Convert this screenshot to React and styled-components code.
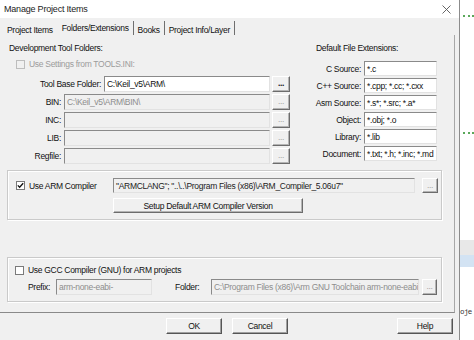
import React from 'react'
import styled, { createGlobalStyle } from 'styled-components'

const GlobalStyle = createGlobalStyle`
  *, *::before, *::after { box-sizing: border-box; }
  html, body { margin: 0; padding: 0; background: #fff; }
  body {
    font-family: "Liberation Sans", Arial, sans-serif;
    font-size: 8.5px;
    letter-spacing: -0.3px;
    color: #111;
  }
  #root { width: 474px; height: 340px; overflow: hidden; }
`

const folderRows = [
  { label: 'Tool Base Folder:', value: 'C:\\Keil_v5\\ARM\\', wide: true },
  { label: 'BIN:', value: 'C:\\Keil_v5\\ARM\\BIN\\', disabled: true },
  { label: 'INC:', value: '', disabled: true },
  { label: 'LIB:', value: '', disabled: true },
  { label: 'Regfile:', value: '', disabled: true }
]

const extRows = [
  { label: 'C Source:', value: '*.c' },
  { label: 'C++ Source:', value: '*.cpp; *.cc; *.cxx' },
  { label: 'Asm Source:', value: '*.s*; *.src; *.a*' },
  { label: 'Object:', value: '*.obj; *.o' },
  { label: 'Library:', value: '*.lib' },
  { label: 'Document:', value: '*.txt; *.h; *.inc; *.md' }
]

const CheckBox = ({ checked, disabled }) => (
  <Box disabled={disabled}>
    {checked &&
      <svg width="7" height="7" viewBox="0 0 7 7">
        <polyline points="0.8,3.4 2.6,5.3 6.2,1.2" fill="none" stroke="#111" strokeWidth="1.3" />
      </svg>}
  </Box>
)

export default function App() {
  return (
    <Screen>
      <GlobalStyle />
      <Window>
        <TitleBar>
          <Title>Manage Project Items</Title>
          <svg width="9" height="9" viewBox="0 0 9 9">
            <path d="M0.5 0.5 L8.5 8.5 M8.5 0.5 L0.5 8.5" stroke="#555" strokeWidth="0.9" />
          </svg>
        </TitleBar>

        <TabStrip>
          <Tab>Project Items</Tab>
          <Tab active sep>Folders/Extensions</Tab>
          <Tab sep>Books</Tab>
          <Tab sep>Project Info/Layer</Tab>
        </TabStrip>

        <TabPage>
          <TopSection>
            <Column>
              <Heading>Development Tool Folders:</Heading>
              <CheckRow indent={9} disabled>
                <CheckBox disabled />
                <span>Use Settings from TOOLS.INI:</span>
              </CheckRow>
              <FolderList>
                {folderRows.map(row => (
                  <FolderRow key={row.label}>
                    <RowLabel width={row.wide ? 94 : 54}>{row.label}</RowLabel>
                    <Field disabled={row.disabled}>{row.value}</Field>
                    <DotsButton disabled={row.disabled} width={18}>...</DotsButton>
                  </FolderRow>
                ))}
              </FolderList>
            </Column>

            <Column>
              <Heading indent={26}>Default File Extensions:</Heading>
              <ExtList>
                {extRows.map(row => (
                  <ExtRow key={row.label}>
                    <RowLabel width={71}>{row.label}</RowLabel>
                    <Field>{row.value}</Field>
                  </ExtRow>
                ))}
              </ExtList>
            </Column>
          </TopSection>

          <ArmGroup>
            <CheckRow>
              <CheckBox checked />
              <span>Use ARM Compiler</span>
            </CheckRow>
            <Field disabled dark>"ARMCLANG"; "..\..\Program Files (x86)\ARM_Compiler_5.06u7"</Field>
            <DotsButton disabled width={16}>...</DotsButton>
            <SetupButton>Setup Default ARM Compiler Version</SetupButton>
          </ArmGroup>

          <GccGroup>
            <CheckRow>
              <CheckBox />
              <span>Use GCC Compiler (GNU) for ARM projects</span>
            </CheckRow>
            <GccRow>
              <InlineLabel gap={13} width={28}>Prefix:</InlineLabel>
              <Field disabled size={96}>arm-none-eabi-</Field>
              <InlineLabel gap={23} width={36}>Folder:</InlineLabel>
              <Field disabled size={208}>C:\Program Files (x86)\Arm GNU Toolchain arm-none-eabi\</Field>
              <DotsButton disabled width={15} gap={3}>...</DotsButton>
            </GccRow>
          </GccGroup>
        </TabPage>

        <ButtonRow>
          <PushButton>OK</PushButton>
          <PushButton>Cancel</PushButton>
          <PushButton push>Help</PushButton>
        </ButtonRow>
      </Window>

      <Backdrop>
        <GreenDots top={15} />
        <GreenDots top={115} />
        <Band top={106} height={15} color="#e8e8e8" />
        <Band height={12} color="#d3e3f3" />
        <CodeText>oje</CodeText>
      </Backdrop>
    </Screen>
  )
}

const Screen = styled.div`
  display: flex;
  width: 474px;
  height: 340px;
  overflow: hidden;
`

const Window = styled.div`
  flex: none;
  width: 460px;
  height: 340px;
  display: flex;
  flex-direction: column;
  background: #f0f0f0;
  border-right: 1px solid #8c8c8c;
`

const TitleBar = styled.div`
  height: 18px;
  flex: none;
  background: #fff;
  display: flex;
  align-items: center;
  justify-content: space-between;
  padding: 0 8px 0 4px;
`

const Title = styled.span`
  font-size: 9px;
  letter-spacing: -0.2px;
  color: #222;
`

const TabStrip = styled.div`
  height: 17px;
  flex: none;
  display: flex;
  align-items: flex-end;
  padding-left: 3px;
`

const Tab = styled.div`
  height: 14px;
  line-height: 10px;
  padding: ${p => (p.active ? '2px 4px 2px' : '4px 4px 0')};
  border-right: 1px solid ${p => (p.sep ? '#6f6f6f' : 'transparent')};
  white-space: nowrap;
`

const TabPage = styled.div`
  flex: none;
  height: 278px;
  margin-right: 4px;
  padding: 7px 12px 0 7px;
  border-right: 1px solid #a8a8a8;
  border-bottom: 1px solid #8a8a8a;
  display: flex;
  flex-direction: column;
`

const TopSection = styled.div`
  display: grid;
  grid-template-columns: 283px 152px;
  height: 122px;
`

const Column = styled.div`
  display: flex;
  flex-direction: column;
`

const Heading = styled.div`
  line-height: 12px;
  height: 12px;
  padding-left: ${p => p.indent || 2}px;
  white-space: nowrap;
`

const CheckRow = styled.div`
  display: flex;
  align-items: center;
  gap: 4px;
  height: ${p => (p.indent ? '12px' : 'auto')};
  margin: ${p => (p.indent ? '4px 0 0' : '0')};
  padding-left: ${p => p.indent || 0}px;
  color: ${p => (p.disabled ? '#9c9c9c' : '#111')};
  white-space: nowrap;
`

const Box = styled.span`
  flex: none;
  width: 9px;
  height: 9px;
  display: flex;
  align-items: center;
  justify-content: center;
  background: ${p => (p.disabled ? '#f0f0f0' : '#fff')};
  border: 1px solid ${p => (p.disabled ? '#bdbdbd' : '#7a7a7a')};
`

const FolderList = styled.div`
  margin-top: 6px;
  display: flex;
  flex-direction: column;
  gap: 2px;
`

const FolderRow = styled.div`
  display: flex;
  align-items: center;
  height: 16px;
`

const ExtList = styled.div`
  margin-top: 7px;
  display: flex;
  flex-direction: column;
  gap: 2px;
`

const ExtRow = styled.div`
  display: flex;
  align-items: center;
  height: 15px;
  width: 147px;
`

const RowLabel = styled.span`
  flex: none;
  width: ${p => p.width}px;
  margin-right: 3px;
  text-align: right;
  white-space: nowrap;
`

const Field = styled.div`
  flex: ${p => (p.size ? 'none' : '1')};
  width: ${p => (p.size ? `${p.size}px` : 'auto')};
  min-width: 0;
  height: 100%;
  padding: 0 2px;
  line-height: 14px;
  overflow: hidden;
  white-space: nowrap;
  background: ${p => (p.disabled ? '#f0f0f0' : '#fff')};
  color: ${p => (p.disabled ? (p.dark ? '#222' : '#8e8e8e') : '#111')};
  border: 1px solid;
  border-color: #8a8a8a #e2e2e2 #e2e2e2 #8a8a8a;
`

const DotsButton = styled.div`
  flex: none;
  width: ${p => p.width}px;
  height: 100%;
  margin-left: ${p => (p.gap !== undefined ? p.gap : 2)}px;
  justify-self: end;
  display: flex;
  align-items: center;
  justify-content: center;
  padding-bottom: 2px;
  font-weight: ${p => (p.disabled ? 'normal' : 'bold')};
  color: ${p => (p.disabled ? '#a3a3a3' : '#111')};
  background: #f0f0f0;
  border: 1px solid;
  border-color: #fff #6c6c6c #6c6c6c #fff;
  box-shadow: inset -1px -1px #b4b4b4;
`

const GroupBox = styled.div`
  border: 1px solid #cacaca;
  box-shadow: inset 1px 1px #fff, 1px 1px #fff;
`

const ArmGroup = styled(GroupBox)`
  margin-top: 6px;
  height: 50px;
  padding: 7px 3px 5px 8px;
  display: grid;
  grid-template-columns: 97px 1fr 23px;
  grid-template-rows: 15px 15px;
  row-gap: 5px;
`

const SetupButton = styled.div`
  grid-column: 2;
  width: 190px;
  height: 15px;
  display: flex;
  align-items: center;
  justify-content: center;
  background: #f0f0f0;
  border: 1px solid;
  border-color: #fff #6c6c6c #6c6c6c #fff;
  box-shadow: inset -1px -1px #b4b4b4;
`

const GccGroup = styled(GroupBox)`
  margin-top: 37px;
  height: 45px;
  padding: 7px 3px 4px 7px;
  display: flex;
  flex-direction: column;
  gap: 4px;
`

const GccRow = styled.div`
  display: flex;
  align-items: center;
  height: 16px;
`

const InlineLabel = styled.span`
  flex: none;
  margin-left: ${p => p.gap}px;
  width: ${p => p.width}px;
  white-space: nowrap;
`

const ButtonRow = styled.div`
  display: flex;
  gap: 10px;
  padding: 5px 6px 0 166px;
`

const PushButton = styled.div`
  width: 56px;
  height: 16px;
  margin-left: ${p => (p.push ? 'auto' : '0')};
  display: flex;
  align-items: center;
  justify-content: center;
  background: #f0f0f0;
  border: 1px solid;
  border-color: #fff #555 #555 #fff;
  box-shadow: inset -1px -1px #a0a0a0;
`

const Backdrop = styled.div`
  flex: 1;
  display: flex;
  flex-direction: column;
  background: #fff;
  overflow: hidden;
`

const GreenDots = styled.div`
  margin-top: ${p => p.top}px;
  margin-left: 3px;
  height: 2px;
  border-top: 2px dotted #5aa85a;
`

const Band = styled.div`
  margin-top: ${p => p.top || 0}px;
  height: ${p => p.height}px;
  background: ${p => p.color};
`

const CodeText = styled.div`
  margin-top: 41px;
  font-family: "Liberation Mono", "DejaVu Sans Mono", monospace;
  font-size: 7.5px;
  letter-spacing: -0.6px;
  color: #333;
  white-space: nowrap;
`
